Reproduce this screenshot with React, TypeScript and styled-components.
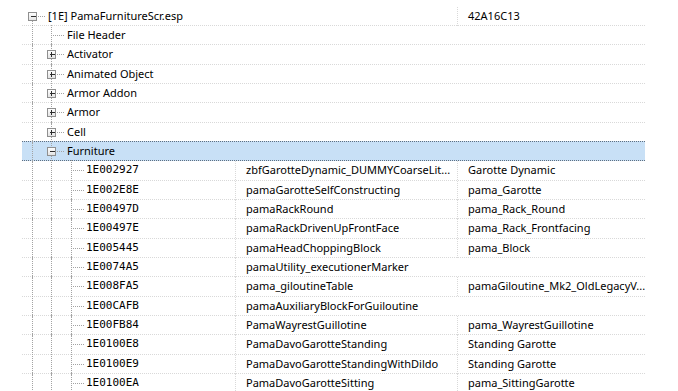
import React from "react";
import styled, { createGlobalStyle } from "styled-components";

type Row = {
  level: number;
  expander?: "plus" | "minus";
  label: string;
  mono?: boolean;
  editorId?: string;
  name?: string;
  selected?: boolean;
};

const rows: Row[] = [
  { level: 0, expander: "minus", label: "[1E] PamaFurnitureScr.esp", name: "42A16C13" },
  { level: 1, label: "File Header" },
  { level: 1, expander: "plus", label: "Activator" },
  { level: 1, expander: "plus", label: "Animated Object" },
  { level: 1, expander: "plus", label: "Armor Addon" },
  { level: 1, expander: "plus", label: "Armor" },
  { level: 1, expander: "plus", label: "Cell" },
  { level: 1, expander: "minus", label: "Furniture", selected: true },
  { level: 2, mono: true, label: "1E002927", editorId: "zbfGarotteDynamic_DUMMYCoarseLit...", name: "Garotte Dynamic" },
  { level: 2, mono: true, label: "1E002E8E", editorId: "pamaGarotteSelfConstructing", name: "pama_Garotte" },
  { level: 2, mono: true, label: "1E00497D", editorId: "pamaRackRound", name: "pama_Rack_Round" },
  { level: 2, mono: true, label: "1E00497E", editorId: "pamaRackDrivenUpFrontFace", name: "pama_Rack_Frontfacing" },
  { level: 2, mono: true, label: "1E005445", editorId: "pamaHeadChoppingBlock", name: "pama_Block" },
  { level: 2, mono: true, label: "1E0074A5", editorId: "pamaUtility_executionerMarker" },
  { level: 2, mono: true, label: "1E008FA5", editorId: "pama_giloutineTable", name: "pamaGiloutine_Mk2_OldLegacyV..." },
  { level: 2, mono: true, label: "1E00CAFB", editorId: "pamaAuxiliaryBlockForGuiloutine" },
  { level: 2, mono: true, label: "1E00FB84", editorId: "PamaWayrestGuillotine", name: "pama_WayrestGuillotine" },
  { level: 2, mono: true, label: "1E0100E8", editorId: "PamaDavoGarotteStanding", name: "Standing Garotte" },
  { level: 2, mono: true, label: "1E0100E9", editorId: "PamaDavoGarotteStandingWithDildo", name: "Standing Garotte" },
  { level: 2, mono: true, label: "1E0100EA", editorId: "PamaDavoGarotteSitting", name: "pama_SittingGarotte" },
];

const centers = [10, 29, 49];
const guideWidths = [26, 45, 64];
const LINE = "#a3a3a3";

const Global = createGlobalStyle`
  body {
    margin: 0;
    background: #ffffff;
    font-family: "Noto Sans", "Liberation Sans", sans-serif;
    font-size: 11px;
    color: #000000;
  }
`;

const Tree = styled.div`
  padding: 6.67px 0 0 22px;
  width: 623px;
  height: 391px;
  overflow: hidden;
`;

const RowLine = styled.div<{ $selected?: boolean }>`
  display: grid;
  grid-template-columns: 213px 222px 188px;
  box-sizing: border-box;
  border-bottom: 1px dotted ${(p) => (p.$selected ? "#5f6f80" : "#d9d9d9")};
  border-top: ${(p) => (p.$selected ? "1px dotted #5f6f80" : "none")};
  margin-top: ${(p) => (p.$selected ? "-1px" : "0")};
  height: ${(p) => (p.$selected ? "20.33px" : "19.33px")};
  background: ${(p) => (p.$selected ? "#c8e0f6" : "transparent")};
`;

const TreeCell = styled.div`
  display: flex;
  align-items: center;
  min-width: 0;
  white-space: nowrap;
`;

const Label = styled.span<{ $mono?: boolean }>`
  font-family: ${(p) =>
    p.$mono ? '"DejaVu Sans Mono", "Liberation Mono", monospace' : '"Noto Sans", "Liberation Sans", sans-serif'};
  font-size: 11px;
  line-height: 1;
  padding-bottom: 2px;
`;

const Cell = styled.div<{ $lined: boolean }>`
  display: flex;
  align-items: center;
  padding: 0 8px 0 10px;
  min-width: 0;
  white-space: nowrap;
  overflow: hidden;
  border-left: 1px dotted ${(p) => (p.$lined ? "#d9d9d9" : "transparent")};
`;

const Guides = ({ level, expander }: { level: number; expander?: "plus" | "minus" }) => {
  const w = guideWidths[level];
  const cx = centers[level] + 0.5;
  const cy = 9.5;
  const lines: React.ReactNode[] = [];
  // lines of the ancestors that still have siblings below
  for (let l = 0; l < level; l++) {
    const x = centers[l] + 0.5;
    lines.push(<line key={"a" + l} x1={x} x2={x} y1={-1} y2={21} />);
  }
  if (level === 0) {
    lines.push(<line key="own" x1={cx} x2={cx} y1={expander ? 14 : 0} y2={21} />);
  } else if (expander) {
    lines.push(<line key="ot" x1={cx} x2={cx} y1={-1} y2={5} />);
    lines.push(<line key="ob" x1={cx} x2={cx} y1={14} y2={21} />);
  } else {
    lines.push(<line key="own" x1={cx} x2={cx} y1={-1} y2={21} />);
  }
  lines.push(<line key="h" x1={expander ? cx + 5 : cx + 1} x2={cx + 12} y1={cy} y2={cy} />);
  return (
    <svg width={w} height={19} style={{ flex: "none", overflow: "visible", alignSelf: "flex-start" }}>
      <defs>
        <linearGradient id="boxg" x1="0" y1="0" x2="0" y2="1">
          <stop offset="0" stopColor="#ffffff" />
          <stop offset="1" stopColor="#e2e2e2" />
        </linearGradient>
      </defs>
      <g stroke={LINE} strokeWidth={1} strokeDasharray="1 1" shapeRendering="crispEdges">
        {lines}
      </g>
      {expander && (
        <g shapeRendering="crispEdges">
          <rect x={cx - 4} y={5.5} width={8} height={8} fill="url(#boxg)" stroke="#8f8f8f" />
          <line x1={cx - 2} x2={cx + 3} y1={cy} y2={cy} stroke="#2d2d2d" />
          {expander === "plus" && <line x1={cx} x2={cx} y1={7} y2={12} stroke="#2d2d2d" />}
        </g>
      )}
    </svg>
  );
};

export default function App() {
  return (
    <>
      <Global />
      <Tree>
        {rows.map((r, i) => (
          <RowLine key={i} $selected={r.selected}>
            <TreeCell>
              <Guides level={r.level} expander={r.expander} />
              <Label $mono={r.mono}>{r.label}</Label>
            </TreeCell>
            <Cell $lined={!!r.editorId}>
              <Label>{r.editorId}</Label>
            </Cell>
            <Cell $lined={!!r.name}>
              <Label>{r.name}</Label>
            </Cell>
          </RowLine>
        ))}
      </Tree>
    </>
  );
}
